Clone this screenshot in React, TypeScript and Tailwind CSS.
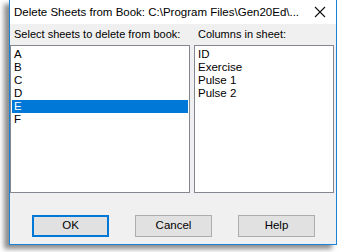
import React from "react";

const sheets = ["A", "B", "C", "D", "E", "F"];
const columns = ["ID", "Exercise", "Pulse 1", "Pulse 2"];

function ListBox({ items, selected, className }: { items: string[]; selected?: string; className: string }) {
    return (
        <div className={"bg-white border border-[#828790] pt-[2px] px-[1px] " + className}>
            {items.map((item) =>
                <div key={item}
                     className={"h-[13px] leading-[13px] pl-[2px] whitespace-nowrap " + (item === selected ? "bg-[#0078d7] text-white" : "text-black")}>
                    {item}
                </div>
            )}
        </div>
    );
}

function DialogButton({ label, focused }: { label: string; focused?: boolean }) {
    return (
        <button
            className={"w-[77px] h-[22px] bg-[#e1e1e1] text-black text-[11.5px] leading-none " +
                (focused ? "border-2 border-[#0078d7]" : "border border-[#adadad]")}>
            {label}
        </button>
    );
}

export default function App() {
    return (
        <div className="w-[339px] h-[252px] bg-white overflow-hidden" style={{ fontFamily: '"Liberation Sans", Arial, sans-serif' }}>
            <div className="ml-[9px] w-[328px] h-[245px] flex flex-col border-x border-b border-[#1883d7] shadow-[-5px_4px_5px_rgba(0,0,0,0.45)] text-[11.5px]">
                <div className="h-[24px] bg-white flex items-center justify-between pl-[4px] pr-[10px] shrink-0">
                    <span className="text-black text-[11.5px] pt-[1px] whitespace-nowrap">Delete Sheets from Book: C:\Program Files\Gen20Ed\...</span>
                    <svg width="12" height="12" viewBox="0 0 12 12" className="mb-[1px] shrink-0">
                        <path d="M1 1 L11 11 M11 1 L1 11" stroke="#111" strokeWidth="1.1" fill="none" />
                    </svg>
                </div>
                <div className="flex-1 bg-[#f0f0f0] flex flex-col">
                    <div className="h-[21px] flex items-center text-black shrink-0 whitespace-nowrap text-[11px]">
                        <span className="pl-[4px] w-[184px]">Select sheets to delete from book:</span>
                        <span className="pl-[4px]">Columns in sheet:</span>
                    </div>
                    <div className="flex gap-[4px] h-[148px]">
                        <ListBox items={sheets} selected="E" className="w-[180px]" />
                        <ListBox items={columns} className="w-[140px]" />
                    </div>
                    <div className="flex pt-[22px] pl-[22px] gap-[26px]">
                        <DialogButton label="OK" focused />
                        <DialogButton label="Cancel" />
                        <DialogButton label="Help" />
                    </div>
                </div>
            </div>
        </div>
    );
}
